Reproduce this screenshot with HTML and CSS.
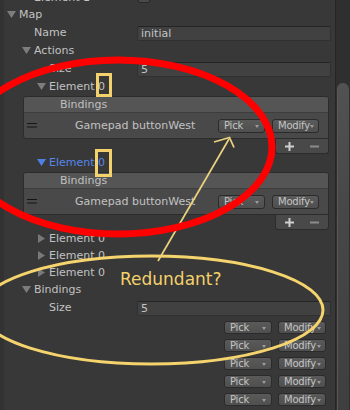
FILE: index.html
```html
<!DOCTYPE html>
<html>
<head>
<meta charset="utf-8">
<link rel="stylesheet" href="styles.css">
</head>
<body>
<div class="page">
  <div class="content">
    <div class="row short first lbl1">
      <span class="label">Element 1</span>
      <span class="check"></span>
    </div>
    <div class="row l0">
      <span class="tri"><svg width="9" height="7" viewBox="0 0 9 7"><polygon points="0,0 9,0 4.5,7" fill="#7d7d7d"/></svg></span>
      <span class="label">Map</span>
    </div>
    <div class="row lbl1">
      <span class="label">Name</span>
      <div class="field">initial</div>
    </div>
    <div class="row l1">
      <span class="tri"><svg width="9" height="7" viewBox="0 0 9 7"><polygon points="0,0 9,0 4.5,7" fill="#7d7d7d"/></svg></span>
      <span class="label">Actions</span>
    </div>
    <div class="row lbl2">
      <span class="label">Size</span>
      <div class="field">5</div>
    </div>
    <div class="row l2">
      <span class="tri"><svg width="9" height="7" viewBox="0 0 9 7"><polygon points="0,0 9,0 4.5,7" fill="#7d7d7d"/></svg></span>
      <span class="label">Element 0</span>
    </div>

    <div class="box">
      <div class="box-main">
        <div class="box-head">Bindings</div>
        <div class="box-body">
          <svg class="handle" width="10" height="5" viewBox="0 0 10 5"><rect x="0" y="0" width="10" height="1" fill="#151515"/><rect x="0" y="3.5" width="10" height="1" fill="#151515"/></svg>
          <span class="bind-name">Gamepad buttonWest</span>
          <div class="btn pick">Pick<i></i></div>
          <div class="btn modify">Modify<i></i></div>
        </div>
      </div>
      <div class="box-foot">
        <svg class="plus" width="9" height="9" viewBox="0 0 9 9"><rect x="0" y="3.5" width="9" height="2" fill="#cfcfcf"/><rect x="3.5" y="0" width="2" height="9" fill="#cfcfcf"/></svg>
        <svg class="minus" width="9" height="9" viewBox="0 0 9 9"><rect x="0" y="3.5" width="9" height="2" fill="#8c8c8c"/></svg>
      </div>
    </div>

    <div class="row l2 selected">
      <span class="tri"><svg width="9" height="7" viewBox="0 0 9 7"><polygon points="0,0 9,0 4.5,7" fill="#4f80e6"/></svg></span>
      <span class="label">Element 0</span>
    </div>

    <div class="box">
      <div class="box-main">
        <div class="box-head">Bindings</div>
        <div class="box-body">
          <svg class="handle" width="10" height="5" viewBox="0 0 10 5"><rect x="0" y="0" width="10" height="1" fill="#151515"/><rect x="0" y="3.5" width="10" height="1" fill="#151515"/></svg>
          <span class="bind-name">Gamepad buttonWest</span>
          <div class="btn pick">Pick<i></i></div>
          <div class="btn modify">Modify<i></i></div>
        </div>
      </div>
      <div class="box-foot">
        <svg class="plus" width="9" height="9" viewBox="0 0 9 9"><rect x="0" y="3.5" width="9" height="2" fill="#cfcfcf"/><rect x="3.5" y="0" width="2" height="9" fill="#cfcfcf"/></svg>
        <svg class="minus" width="9" height="9" viewBox="0 0 9 9"><rect x="0" y="3.5" width="9" height="2" fill="#8c8c8c"/></svg>
      </div>
    </div>

    <div class="row short l2">
      <span class="tri closed"><svg width="7" height="9" viewBox="0 0 7 9"><polygon points="0,0 7,4.5 0,9" fill="#787878"/></svg></span>
      <span class="label">Element 0</span>
    </div>
    <div class="row short l2">
      <span class="tri closed"><svg width="7" height="9" viewBox="0 0 7 9"><polygon points="0,0 7,4.5 0,9" fill="#787878"/></svg></span>
      <span class="label">Element 0</span>
    </div>
    <div class="row short l2">
      <span class="tri closed"><svg width="7" height="9" viewBox="0 0 7 9"><polygon points="0,0 7,4.5 0,9" fill="#787878"/></svg></span>
      <span class="label">Element 0</span>
    </div>
    <div class="row l1">
      <span class="tri"><svg width="9" height="7" viewBox="0 0 9 7"><polygon points="0,0 9,0 4.5,7" fill="#7d7d7d"/></svg></span>
      <span class="label">Bindings</span>
    </div>
    <div class="row lbl2">
      <span class="label">Size</span>
      <div class="field">5</div>
    </div>

    <div class="btn-list">
      <div class="btn-row"><div class="btn small pick">Pick<i></i></div><div class="btn small modify">Modify<i></i></div></div>
      <div class="btn-row"><div class="btn small pick">Pick<i></i></div><div class="btn small modify">Modify<i></i></div></div>
      <div class="btn-row"><div class="btn small pick">Pick<i></i></div><div class="btn small modify">Modify<i></i></div></div>
      <div class="btn-row"><div class="btn small pick">Pick<i></i></div><div class="btn small modify">Modify<i></i></div></div>
      <div class="btn-row"><div class="btn small pick">Pick<i></i></div><div class="btn small modify">Modify<i></i></div></div>
    </div>
  </div>

  <div class="scrollbar"><div class="thumb"></div></div>

  <svg class="annot" width="350" height="410" viewBox="0 0 350 410">
    <ellipse cx="151.5" cy="310" rx="171.5" ry="54" fill="none" stroke="#f5d46e" stroke-width="3"/>
    <line x1="158" y1="261" x2="229" y2="139" stroke="#ecd27c" stroke-width="1.7"/>
    <polyline points="214,142 229.5,137.5 234,147.5" fill="none" stroke="#ecd27c" stroke-width="1.8" stroke-linejoin="round"/>
    <ellipse cx="118" cy="147" rx="154" ry="87" fill="none" stroke="#ff0000" stroke-width="7"/>
    <rect x="97.5" y="74.5" width="13" height="21" fill="none" stroke="#f3d26e" stroke-width="3"/>
    <rect x="96.5" y="150.5" width="14" height="25" fill="none" stroke="#f3d26e" stroke-width="3"/>
  </svg>
  <div class="redundant">Redundant?</div>
</div>
</body>
</html>
```

FILE: styles.css
```css
* { box-sizing: border-box; }
html, body { margin: 0; padding: 0; }
body {
  width: 350px;
  height: 410px;
  overflow: hidden;
  background: #383838;
  font-family: "DejaVu Sans", Verdana, sans-serif;
  font-size: 11px;
  color: #c2c2c2;
}
.page {
  position: relative;
  width: 350px;
  height: 410px;
  display: flex;
  overflow: hidden;
}
.content {
  width: 335px;
  flex: none;
  margin-top: -11px;
  box-shadow: inset 4px 0 0 #323232;
}
.row {
  display: flex;
  align-items: center;
  height: 18px;
  line-height: 18px;
  white-space: nowrap;
}
.row.short { height: 17px; line-height: 17px; }
.l0 { padding-left: 7px; }
.l1 { padding-left: 22px; }
.l2 { padding-left: 37px; }
.lbl1 { padding-left: 34px; }
.lbl2 { padding-left: 49px; }
.tri {
  width: 12px;
  flex: none;
  display: flex;
  align-items: center;
  margin-top: -2px;
}
.tri.closed { margin-left: 1px; width: 11px; margin-top: 0; }
.tri svg { display: block; }
.label { flex: 1; }
.selected .label { color: #5686ea; }
.check {
  width: 12px;
  height: 13px;
  margin-right: 185px;
  margin-top: -2px;
  background: #4a4a4a;
  border: 1px solid #2a2a2a;
  border-radius: 2px;
}
.field {
  width: 194px;
  height: 15px;
  margin-right: 4px;
  padding-left: 3px;
  line-height: 13px;
  background: #414141;
  border: 1px solid #303030;
  border-top-color: #252525;
  border-radius: 2px;
  color: #c4c4c4;
}

/* Bindings list box */
.box {
  margin: 0 6px 0 23px;
  display: flex;
  flex-direction: column;
}
.box-main {
  border: 1px solid #2c2c2c;
  border-radius: 3px 3px 0 3px;
  background: #494949;
  overflow: hidden;
}
.box-head {
  height: 16px;
  line-height: 15px;
  padding-left: 36px;
  background: #555555;
  border-bottom: 1px solid #3d3d3d;
  color: #c0c0c0;
}
.box-body {
  height: 25px;
  display: flex;
  align-items: center;
  padding: 0 9px 0 3px;
}
.handle { display: block; flex: none; }
.bind-name { margin-left: 38px; color: #c2c2c2; }
.box-body .pick { margin-left: auto; }
.box-body .modify { margin-left: 7px; }
.box-foot {
  align-self: flex-end;
  width: 54px;
  height: 15px;
  display: flex;
  align-items: center;
  padding-left: 9px;
  background: #494949;
  border: 1px solid #2c2c2c;
  border-top: none;
  border-radius: 0 0 3px 3px;
}
.box-foot svg { display: block; margin-top: 1px; }
.minus { margin-left: 16px; }

/* Buttons */
.btn {
  width: 47px;
  height: 14px;
  flex: none;
  display: flex;
  align-items: center;
  justify-content: space-between;
  padding: 0 4px 0 5px;
  font-size: 10px;
  line-height: 12px;
  letter-spacing: -0.2px;
  color: #c4c4c4;
  background: linear-gradient(#5a5a5a, #4f4f4f);
  border: 1px solid #2b2b2b;
  border-radius: 3px;
}
.btn i {
  width: 0;
  height: 0;
  border-left: 2.5px solid transparent;
  border-right: 2.5px solid transparent;
  border-top: 3px solid #9c9c9c;
  margin-top: 1px;
}
.btn.pick { padding-right: 5px; }
.btn.small { width: 48px; height: 13px; }
.btn-list { padding-top: 4px; }
.btn-row {
  height: 18px;
  display: flex;
  justify-content: flex-end;
  gap: 6px;
  padding-right: 9px;
}

/* Scrollbar */
.scrollbar {
  width: 15px;
  flex: none;
  display: flex;
  flex-direction: column;
  padding: 83px 1px 0 1px;
  background: #2f2f2f;
  border-left: 1px solid #262626;
}
.thumb {
  flex: 1;
  border-radius: 7px 7px 0 0;
  background: linear-gradient(#525252, #474747 40%, #3f3f3f);
  border-left: 1px solid #585858;
}

/* Annotations */
.annot {
  position: absolute;
  left: 0;
  top: 0;
  pointer-events: none;
}
.redundant {
  position: absolute;
  left: 120px;
  top: 269px;
  font-size: 17px;
  line-height: 20px;
  color: #f3d16b;
  white-space: nowrap;
}
```
